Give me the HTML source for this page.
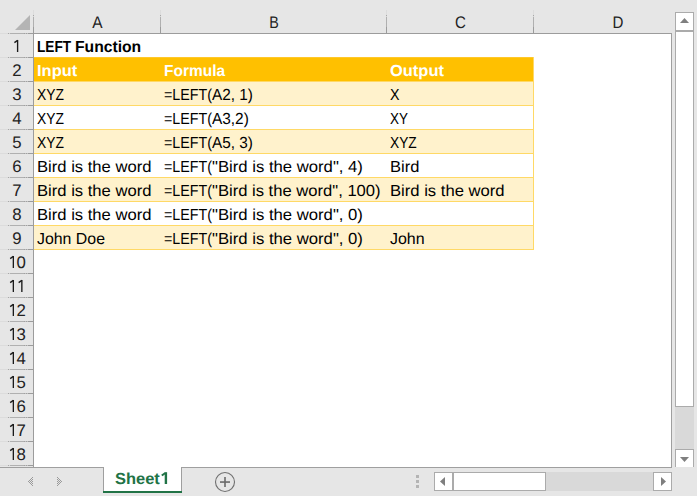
<!DOCTYPE html>
<html><head><meta charset="utf-8"><style>
html,body{margin:0;padding:0;}
body{width:697px;height:496px;overflow:hidden;position:relative;background:#fff;font-family:"Liberation Sans",sans-serif;text-rendering:geometricPrecision;}
.r{position:absolute;}
.t{position:absolute;height:24px;line-height:24px;font-size:16px;white-space:nowrap;transform-origin:0 0;}
.b{font-weight:bold;}
.hd{width:33px;height:1px;background:linear-gradient(to right,#dcdcdc 0 8px,#a8a8a8 8px 9px,#d8d8d8 9px 10px,#b0b0b0 10px 24px,#a0a0a0 24px 25px,#c4c4c4 25px 26px,#a0a0a0 26px 27px,#c4c4c4 27px 28px,#9c9c9c 28px 33px);}
.vd{top:10px;width:1px;height:23px;background:linear-gradient(#dcdcdc 0 5px,#a8a8a8 5px 6px,#d8d8d8 6px 7px,#b0b0b0 7px 17px,#9c9c9c 17px 23px);}

.rn{position:absolute;width:8.5px;height:24px;line-height:27px;text-align:center;font-size:16.8px;color:#222;}
.ch{position:absolute;top:0;height:33px;line-height:45px;text-align:center;font-size:16.8px;color:#222;}
</style></head><body>
<!-- column header bar -->
<div class="r" style="left:0;top:0;width:697px;height:33px;background:#e6e6e6"></div>
<div class="r" style="left:0;top:33px;width:672px;height:1px;background:#9c9c9c"></div>
<div class="ch" style="left:34px;width:127px;transform:scaleX(0.92)">A</div>
<div class="ch" style="left:161px;width:226px;transform:scaleX(0.85)">B</div>
<div class="ch" style="left:387px;width:147px;transform:scaleX(0.9)">C</div>
<div class="ch" style="left:533px;width:170px;transform:scaleX(0.9)">D</div>
<div class="r vd" style="left:160px"></div>
<div class="r vd" style="left:386px"></div>
<div class="r vd" style="left:533px"></div>
<svg class="r" style="left:0;top:0" width="33" height="33"><polygon points="15,30 30,30 30,15" fill="#b4b4b4"/></svg>
<!-- row header -->
<div class="r" style="left:0;top:34px;width:33px;height:433px;background:#e6e6e6"></div>
<div class="r hd" style="left:0;top:465px"></div><svg class="r" style="left:0;top:33px" width="33" height="24"><path d="M17.60 7 V19" stroke="#1a1a1a" stroke-width="1.35" fill="none"/><path d="M14.40 9.6 L17.60 7.4" stroke="#1a1a1a" stroke-width="1.3" fill="none"/></svg><div class="r hd" style="left:0;top:33px"></div><div class="rn" style="top:57px;left:12.25px">2</div><div class="r hd" style="left:0;top:57px"></div><div class="rn" style="top:81px;left:12.25px">3</div><div class="r hd" style="left:0;top:81px"></div><div class="rn" style="top:105px;left:12.25px">4</div><div class="r hd" style="left:0;top:105px"></div><div class="rn" style="top:129px;left:12.25px">5</div><div class="r hd" style="left:0;top:129px"></div><div class="rn" style="top:153px;left:12.25px">6</div><div class="r hd" style="left:0;top:153px"></div><div class="rn" style="top:177px;left:12.25px">7</div><div class="r hd" style="left:0;top:177px"></div><div class="rn" style="top:201px;left:12.25px">8</div><div class="r hd" style="left:0;top:201px"></div><div class="rn" style="top:225px;left:12.25px">9</div><div class="r hd" style="left:0;top:225px"></div><svg class="r" style="left:0;top:249px" width="33" height="24"><path d="M13.35 7 V19" stroke="#1a1a1a" stroke-width="1.35" fill="none"/><path d="M10.15 9.6 L13.35 7.4" stroke="#1a1a1a" stroke-width="1.3" fill="none"/></svg><div class="rn" style="top:249px;left:16.50px">0</div><div class="r hd" style="left:0;top:249px"></div><svg class="r" style="left:0;top:273px" width="33" height="24"><path d="M13.35 7 V19" stroke="#1a1a1a" stroke-width="1.35" fill="none"/><path d="M10.15 9.6 L13.35 7.4" stroke="#1a1a1a" stroke-width="1.3" fill="none"/></svg><svg class="r" style="left:0;top:273px" width="33" height="24"><path d="M21.85 7 V19" stroke="#1a1a1a" stroke-width="1.35" fill="none"/><path d="M18.65 9.6 L21.85 7.4" stroke="#1a1a1a" stroke-width="1.3" fill="none"/></svg><div class="r hd" style="left:0;top:273px"></div><svg class="r" style="left:0;top:297px" width="33" height="24"><path d="M13.35 7 V19" stroke="#1a1a1a" stroke-width="1.35" fill="none"/><path d="M10.15 9.6 L13.35 7.4" stroke="#1a1a1a" stroke-width="1.3" fill="none"/></svg><div class="rn" style="top:297px;left:16.50px">2</div><div class="r hd" style="left:0;top:297px"></div><svg class="r" style="left:0;top:321px" width="33" height="24"><path d="M13.35 7 V19" stroke="#1a1a1a" stroke-width="1.35" fill="none"/><path d="M10.15 9.6 L13.35 7.4" stroke="#1a1a1a" stroke-width="1.3" fill="none"/></svg><div class="rn" style="top:321px;left:16.50px">3</div><div class="r hd" style="left:0;top:321px"></div><svg class="r" style="left:0;top:345px" width="33" height="24"><path d="M13.35 7 V19" stroke="#1a1a1a" stroke-width="1.35" fill="none"/><path d="M10.15 9.6 L13.35 7.4" stroke="#1a1a1a" stroke-width="1.3" fill="none"/></svg><div class="rn" style="top:345px;left:16.50px">4</div><div class="r hd" style="left:0;top:345px"></div><svg class="r" style="left:0;top:369px" width="33" height="24"><path d="M13.35 7 V19" stroke="#1a1a1a" stroke-width="1.35" fill="none"/><path d="M10.15 9.6 L13.35 7.4" stroke="#1a1a1a" stroke-width="1.3" fill="none"/></svg><div class="rn" style="top:369px;left:16.50px">5</div><div class="r hd" style="left:0;top:369px"></div><svg class="r" style="left:0;top:393px" width="33" height="24"><path d="M13.35 7 V19" stroke="#1a1a1a" stroke-width="1.35" fill="none"/><path d="M10.15 9.6 L13.35 7.4" stroke="#1a1a1a" stroke-width="1.3" fill="none"/></svg><div class="rn" style="top:393px;left:16.50px">6</div><div class="r hd" style="left:0;top:393px"></div><svg class="r" style="left:0;top:417px" width="33" height="24"><path d="M13.35 7 V19" stroke="#1a1a1a" stroke-width="1.35" fill="none"/><path d="M10.15 9.6 L13.35 7.4" stroke="#1a1a1a" stroke-width="1.3" fill="none"/></svg><div class="rn" style="top:417px;left:16.50px">7</div><div class="r hd" style="left:0;top:417px"></div><svg class="r" style="left:0;top:441px" width="33" height="24"><path d="M13.35 7 V19" stroke="#1a1a1a" stroke-width="1.35" fill="none"/><path d="M10.15 9.6 L13.35 7.4" stroke="#1a1a1a" stroke-width="1.3" fill="none"/></svg><div class="rn" style="top:441px;left:16.50px">8</div><div class="r hd" style="left:0;top:441px"></div>
<div class="r vd" style="left:33px"></div><div class="r" style="left:33px;top:33px;width:1px;height:434px;background:#9c9c9c"></div>
<div class="t b" style="left:37.16px;top:36px;color:#000;transform:scaleX(0.8527)">LEFT</div><div class="t b" style="left:74.92px;top:36px;color:#000;transform:scaleX(0.9802)">Function</div><div class="r" style="left:34px;top:57px;width:500px;height:24px;background:#FFC000;border-top:1px solid #FFC82A;box-sizing:border-box"></div><div class="t b" style="left:36.77px;top:60px;color:#fff;transform:scaleX(1.0291)">Input</div><div class="t b" style="left:163.79px;top:60px;color:#fff;transform:scaleX(0.9670)">Formula</div><div class="t b" style="left:389.88px;top:60px;color:#fff;transform:scaleX(1.0291)">Output</div><div class="r" style="left:34px;top:81px;width:500px;height:24px;background:#FFF2CC;border-top:1px solid #FFD966;box-sizing:border-box"></div><div class="t" style="left:36.85px;top:84px;color:#000;transform:scaleX(0.8642)">XYZ</div><div class="t" style="left:163.89px;top:84px;color:#000;transform:scaleX(0.8920)">=LEFT(</div><div class="t" style="left:212.40px;top:84px;color:#000;transform:scaleX(0.9567)">A2, 1)</div><div class="t" style="left:389.84px;top:84px;color:#000;transform:scaleX(0.8889)">X</div><div class="r" style="left:34px;top:105px;width:500px;height:24px;background:#fff;border-top:1px solid #FFD966;box-sizing:border-box"></div><div class="t" style="left:36.85px;top:108px;color:#000;transform:scaleX(0.8642)">XYZ</div><div class="t" style="left:163.89px;top:108px;color:#000;transform:scaleX(0.8920)">=LEFT(</div><div class="t" style="left:212.40px;top:108px;color:#000;transform:scaleX(0.9624)">A3,2)</div><div class="t" style="left:389.86px;top:108px;color:#000;transform:scaleX(0.8398)">XY</div><div class="r" style="left:34px;top:129px;width:500px;height:24px;background:#FFF2CC;border-top:1px solid #FFD966;box-sizing:border-box"></div><div class="t" style="left:36.85px;top:132px;color:#000;transform:scaleX(0.8642)">XYZ</div><div class="t" style="left:163.89px;top:132px;color:#000;transform:scaleX(0.8920)">=LEFT(</div><div class="t" style="left:212.40px;top:132px;color:#000;transform:scaleX(0.9567)">A5, 3)</div><div class="t" style="left:389.86px;top:132px;color:#000;transform:scaleX(0.8576)">XYZ</div><div class="r" style="left:34px;top:153px;width:500px;height:24px;background:#fff;border-top:1px solid #FFD966;box-sizing:border-box"></div><div class="t" style="left:36.85px;top:156px;color:#000;transform:scaleX(1.0380)">Bird is the word</div><div class="t" style="left:163.89px;top:156px;color:#000;transform:scaleX(0.8920)">=LEFT(</div><div class="t" style="left:211.77px;top:156px;color:#000;transform:scaleX(1.0426)">&quot;Bird is the word&quot;, 4)</div><div class="t" style="left:389.66px;top:156px;color:#000;transform:scaleX(1.0307)">Bird</div><div class="r" style="left:34px;top:177px;width:500px;height:24px;background:#FFF2CC;border-top:1px solid #FFD966;box-sizing:border-box"></div><div class="t" style="left:36.85px;top:180px;color:#000;transform:scaleX(1.0380)">Bird is the word</div><div class="t" style="left:163.89px;top:180px;color:#000;transform:scaleX(0.8920)">=LEFT(</div><div class="t" style="left:211.77px;top:180px;color:#000;transform:scaleX(1.0373)">&quot;Bird is the word&quot;, 100)</div><div class="t" style="left:389.75px;top:180px;color:#000;transform:scaleX(1.0389)">Bird is the word</div><div class="r" style="left:34px;top:201px;width:500px;height:24px;background:#fff;border-top:1px solid #FFD966;box-sizing:border-box"></div><div class="t" style="left:36.85px;top:204px;color:#000;transform:scaleX(1.0380)">Bird is the word</div><div class="t" style="left:163.89px;top:204px;color:#000;transform:scaleX(0.8920)">=LEFT(</div><div class="t" style="left:211.77px;top:204px;color:#000;transform:scaleX(1.0426)">&quot;Bird is the word&quot;, 0)</div><div class="r" style="left:34px;top:225px;width:500px;height:24px;background:#FFF2CC;border-top:1px solid #FFD966;box-sizing:border-box"></div><div class="t" style="left:36.70px;top:228px;color:#000;transform:scaleX(0.9926)">John Doe</div><div class="t" style="left:163.89px;top:228px;color:#000;transform:scaleX(0.8920)">=LEFT(</div><div class="t" style="left:211.77px;top:228px;color:#000;transform:scaleX(1.0426)">&quot;Bird is the word&quot;, 0)</div><div class="t" style="left:389.60px;top:228px;color:#000;transform:scaleX(0.9970)">John</div><div class="r" style="left:533px;top:57px;width:1px;height:193px;background:#FFD966"></div><div class="r" style="left:34px;top:249px;width:500px;height:1px;background:#FFD966"></div>
<!-- right gray strip & grid border -->
<div class="r" style="left:671px;top:33px;width:1px;height:435px;background:#9f9f9f"></div>
<div class="r" style="left:672px;top:33px;width:25px;height:463px;background:#e6e6e6"></div>
<!-- vertical scrollbar -->
<div class="r" style="left:675px;top:12px;width:19px;height:19px;background:#fff;border:1px solid #ababab;box-sizing:border-box"></div>
<svg class="r" style="left:675px;top:12px" width="19" height="19"><polygon points="5,11 14,11 9.5,6" fill="#7f7f7f"/></svg>
<div class="r" style="left:675px;top:31px;width:19px;height:418px;background:#d9d9d9"></div>
<div class="r" style="left:675px;top:31px;width:19px;height:376px;background:#fff;border:1px solid #ababab;box-sizing:border-box"></div>
<div class="r" style="left:675px;top:449px;width:19px;height:19px;background:#fff;border:1px solid #ababab;box-sizing:border-box"></div>
<svg class="r" style="left:675px;top:449px" width="19" height="19"><polygon points="5,8 14,8 9.5,13" fill="#7f7f7f"/></svg>
<!-- tab bar -->
<div class="r" style="left:0;top:467px;width:697px;height:29px;background:#e6e6e6"></div>
<div class="r" style="left:0;top:467px;width:672px;height:1px;background:#9f9f9f"></div>
<svg class="r" style="left:20px;top:472px" width="50" height="20" shape-rendering="crispEdges"><g fill="#9a9a9a"><rect x="8" y="9" width="1" height="1"/><rect x="9" y="8" width="1" height="1"/><rect x="9" y="10" width="1" height="1"/><rect x="10" y="7" width="1" height="1"/><rect x="10" y="9" width="1" height="1"/><rect x="10" y="11" width="1" height="1"/><rect x="11" y="6" width="1" height="1"/><rect x="11" y="8" width="1" height="1"/><rect x="11" y="10" width="1" height="1"/><rect x="11" y="12" width="1" height="1"/><rect x="12" y="5" width="1" height="1"/><rect x="12" y="7" width="1" height="1"/><rect x="12" y="9" width="1" height="1"/><rect x="12" y="11" width="1" height="1"/><rect x="12" y="13" width="1" height="1"/><rect x="37" y="5" width="1" height="1"/><rect x="37" y="7" width="1" height="1"/><rect x="37" y="9" width="1" height="1"/><rect x="37" y="11" width="1" height="1"/><rect x="37" y="13" width="1" height="1"/><rect x="38" y="6" width="1" height="1"/><rect x="38" y="8" width="1" height="1"/><rect x="38" y="10" width="1" height="1"/><rect x="38" y="12" width="1" height="1"/><rect x="39" y="7" width="1" height="1"/><rect x="39" y="9" width="1" height="1"/><rect x="39" y="11" width="1" height="1"/><rect x="40" y="8" width="1" height="1"/><rect x="40" y="10" width="1" height="1"/><rect x="41" y="9" width="1" height="1"/></g></svg>
<div class="r" style="left:103px;top:467px;width:79px;height:26px;background:#fff;border:1px solid #9f9f9f;border-top:none;border-bottom:none;box-sizing:border-box"></div>
<div class="r" style="left:103px;top:491px;width:79px;height:2px;background:#217346"></div>
<div class="t b" style="left:115.29px;top:468px;color:#217346;font-size:16px;transform:scaleX(1.028)">Sheet</div>
<svg class="r" style="left:150px;top:466px" width="24" height="24"><path d="M15.9 6.2 V18" stroke="#217346" stroke-width="2.4" fill="none"/><path d="M11.8 9.5 L15.4 7.0" stroke="#217346" stroke-width="2.1" fill="none"/></svg>
<svg class="r" style="left:213px;top:470px" width="24" height="24">
 <circle cx="12" cy="12" r="9.5" fill="none" stroke="#707070" stroke-width="1.1"/>
 <rect x="7" y="11.25" width="10" height="1.6" fill="#6a6a6a"/>
 <rect x="11.2" y="7" width="1.6" height="10" fill="#6a6a6a"/>
</svg>
<div class="r" style="left:416px;top:475px;width:3px;height:3px;background:#b4b4b4"></div>
<div class="r" style="left:416px;top:480px;width:3px;height:3px;background:#b4b4b4"></div>
<div class="r" style="left:416px;top:485px;width:3px;height:3px;background:#b4b4b4"></div>
<div class="r" style="left:434px;top:472px;width:238px;height:19px;background:#d9d9d9"></div>
<div class="r" style="left:434px;top:472px;width:19px;height:19px;background:#fff;border:1px solid #ababab;box-sizing:border-box"></div>
<svg class="r" style="left:434px;top:472px" width="19" height="19"><polygon points="11,5 11,14 6,9.5" fill="#7f7f7f"/></svg>
<div class="r" style="left:453px;top:472px;width:93px;height:19px;background:#fff;border:1px solid #ababab;box-sizing:border-box"></div>
<div class="r" style="left:653px;top:472px;width:19px;height:19px;background:#fff;border:1px solid #ababab;box-sizing:border-box"></div>
<svg class="r" style="left:653px;top:472px" width="19" height="19"><polygon points="8,5 8,14 13,9.5" fill="#7f7f7f"/></svg>
</body></html>
